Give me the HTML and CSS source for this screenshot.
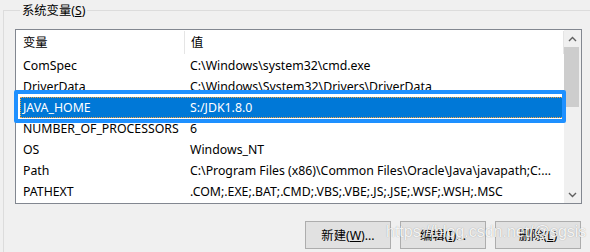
FILE: index.html
```html
<!DOCTYPE html>
<html lang="zh-CN">
<head>
    <meta charset="UTF-8">
    <title>系统变量</title>
    <link rel="stylesheet" href="styles.css">
</head>
<body>
    <fieldset class="group">
        <legend>系统变量(<u>S</u>)</legend>
        <div class="listbox">
            <div class="list">
                <div class="list-head">
                    <div class="col-name">变量</div>
                    <div class="col-value">值</div>
                </div>
                <div class="row"><div class="col-name">ComSpec</div><div class="col-value">C:\Windows\system32\cmd.exe</div></div>
                <div class="row"><div class="col-name">DriverData</div><div class="col-value">C:\Windows\System32\Drivers\DriverData</div></div>
                <div class="row selected"><div class="col-name">JAVA_HOME</div><div class="col-value">S:/JDK1.8.0</div></div>
                <div class="row"><div class="col-name">NUMBER_OF_PROCESSORS</div><div class="col-value">6</div></div>
                <div class="row"><div class="col-name">OS</div><div class="col-value">Windows_NT</div></div>
                <div class="row"><div class="col-name">Path</div><div class="col-value">C:\Program Files (x86)\Common Files\Oracle\Java\javapath;C:...</div></div>
                <div class="row"><div class="col-name">PATHEXT</div><div class="col-value">.COM;.EXE;.BAT;.CMD;.VBS;.VBE;.JS;.JSE;.WSF;.WSH;.MSC</div></div>
            </div>
            <div class="scrollbar">
                <div class="arrow">
                    <svg width="9" height="6" viewBox="0 0 9 6"><path d="M1 5 L4.5 1.5 L8 5" fill="none" stroke="#606060" stroke-width="1.4"/></svg>
                </div>
                <div class="thumb"></div>
                <div class="track"></div>
                <div class="arrow">
                    <svg width="9" height="6" viewBox="0 0 9 6"><path d="M1 1 L4.5 4.5 L8 1" fill="none" stroke="#606060" stroke-width="1.4"/></svg>
                </div>
            </div>
            <!-- annotation box drawn over the selected row -->
            <div class="highlight"></div>
        </div>
        <div class="buttons">
            <button>新建(<u>W</u>)...</button>
            <button>编辑(<u>I</u>)...</button>
            <button>删除(<u>L</u>)</button>
        </div>
    </fieldset>
    <div class="watermark">https://blog.csdn.net/@sgsis</div>
</body>
</html>
```

FILE: styles.css
```css
body {
    margin: 0;
    width: 590px;
    height: 252px;
    overflow: hidden;
    position: relative;
    background-color: #f0f0f0;
    font-family: "Noto Sans", "Noto Sans CJK SC", sans-serif;
    font-size: 12.3px;
    color: #000;
}
.group {
    margin: 2px 0 0 3px;
    padding: 0 0 0 11px;
    height: 260px;
    border: 1px solid #dcdcdc;
    border-right: none;
    border-bottom: none;
}
.group legend {
    margin-left: 5px;
    padding: 0 2px;
    line-height: 17px;
}
.listbox {
    position: relative;
    display: flex;
    width: 565px;
    height: 173px;
    margin-top: 10px;
    border: 1px solid #828790;
    background-color: #fff;
}
.list {
    flex: 1;
}
.list-head,
.row {
    display: flex;
    align-items: center;
    white-space: nowrap;
}
.list-head {
    height: 25px;
}
.list-head .col-name {
    border-right: 1px solid #e5e5e5;
    height: 23px;
    line-height: 23px;
}
.list-head .col-value {
    flex: 1;
    border-right: 1px solid #e5e5e5;
    height: 23px;
    line-height: 23px;
}
.row {
    height: 21px;
    margin-left: 4px;
}
.col-name {
    width: 161px;
    padding-left: 7px;
    flex-shrink: 0;
}
.row .col-name {
    width: 164px;
    padding-left: 3px;
}
.col-value {
    padding-left: 6px;
}
.row .col-value {
    padding-left: 3px;
}
.selected {
    background-color: #0078d7;
    color: #fff;
    outline: 1px dotted #f0a040;
    outline-offset: -1px;
}
.scrollbar {
    width: 17px;
    display: flex;
    flex-direction: column;
    background-color: #f0f0f0;
}
.arrow {
    height: 17px;
    display: flex;
    align-items: center;
    justify-content: center;
}
.thumb {
    height: 60px;
    margin: 0 2px 0 0;
    background-color: #cdcdcd;
}
.track {
    flex: 1;
}
.highlight {
    position: absolute;
    left: -2px;
    top: 60px;
    width: 544px;
    height: 25px;
    border: 4px solid #1e90ff;
    border-radius: 2px;
}
.buttons {
    display: flex;
    justify-content: flex-end;
    gap: 9px;
    width: 566px;
    margin-top: 17px;
}
button {
    width: 86px;
    height: 28px;
    padding: 0;
    font-family: "Noto Sans", "Noto Sans CJK SC", sans-serif;
    font-size: 12.3px;
    color: #000;
    background-color: #e1e1e1;
    border: 1px solid #adadad;
}
.watermark {
    position: absolute;
    left: 386px;
    top: 223px;
    font-family: "Liberation Sans", sans-serif;
    font-size: 16px;
    color: rgba(255, 255, 255, 0.9);
    text-shadow: 0 0 1px rgba(0, 0, 0, 0.35);
    pointer-events: none;
}
```
